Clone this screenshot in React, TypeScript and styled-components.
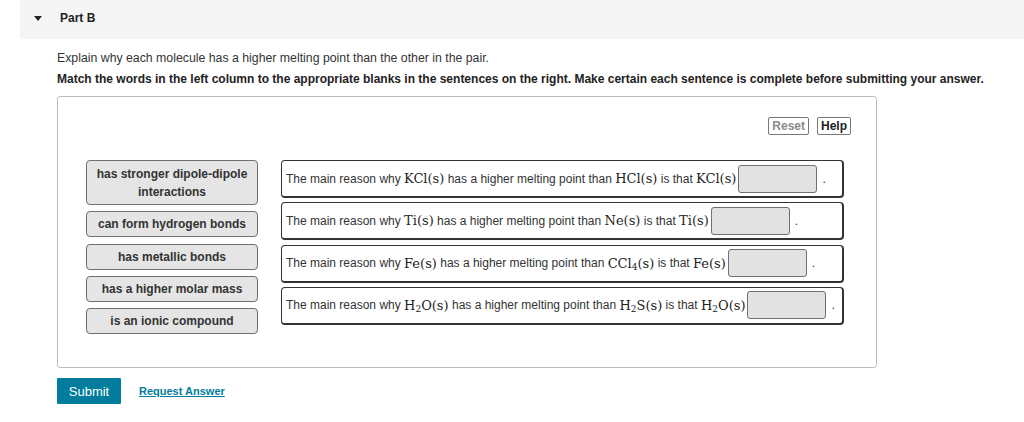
import React from "react";
import styled, { createGlobalStyle } from "styled-components";

const GlobalStyle = createGlobalStyle`
  html, body {
    margin: 0;
    padding: 0;
    background: #ffffff;
    font-family: "Liberation Sans", Arial, sans-serif;
    color: #333333;
  }
`;

const Page = styled.div`
  padding-left: 20px;
  width: 1004px;
`;

const PartHeader = styled.div`
  height: 39px;
  background: #f5f5f5;
  display: flex;
  align-items: center;
  padding-left: 14px;
  gap: 18px;
`;

const Caret = styled.span`
  width: 0;
  height: 0;
  border-left: 4px solid transparent;
  border-right: 4px solid transparent;
  border-top: 5px solid #222;
  margin-top: -3px;
`;

const PartTitle = styled.span`
  font-size: 12px;
  font-weight: bold;
  color: #222;
  margin-top: -4px;
`;

const Body = styled.div`
  padding: 12px 0 0 37px;
`;

const Prompt = styled.p<{ $bold?: boolean }>`
  margin: 0 0 7px;
  font-size: ${(p) => (p.$bold ? "12px" : "12.3px")};
  line-height: 14px;
  font-weight: ${(p) => (p.$bold ? "bold" : "normal")};
  color: ${(p) => (p.$bold ? "#222" : "#333")};
`;

const Panel = styled.div`
  margin-top: 10px;
  width: 820px;
  height: 272px;
  box-sizing: border-box;
  border: 1px solid #bdbdbd;
  border-radius: 3px;
  padding: 20px 25px 0 28px;
`;

const Tools = styled.div`
  display: flex;
  justify-content: flex-end;
  gap: 8px;
`;

const ToolButton = styled.button<{ $muted?: boolean }>`
  font-family: "Liberation Sans", Arial, sans-serif;
  font-size: 12px;
  font-weight: bold;
  height: 18px;
  padding: 0 3px;
  background: #fff;
  border: 1px solid #777;
  border-radius: 2px;
  color: ${(p) => (p.$muted ? "#8a8a8a" : "#222")};
  line-height: 14px;
`;

const Content = styled.div`
  margin-top: 25px;
  display: flex;
  gap: 23px;
`;

const Options = styled.div`
  width: 172px;
  display: flex;
  flex-direction: column;
  gap: 6.3px;
`;

const Option = styled.div<{ $tall?: boolean }>`
  box-sizing: border-box;
  height: ${(p) => (p.$tall ? "45px" : "26px")};
  padding: 0 6px;
  background: #e5e5e5;
  border: 1px solid #6f6f6f;
  border-radius: 4px;
  font-size: 12px;
  line-height: 18px;
  font-weight: bold;
  color: #333;
  text-align: center;
  display: flex;
  align-items: center;
  justify-content: center;
`;

const Sentences = styled.div`
  width: 563px;
  display: flex;
  flex-direction: column;
  gap: 4.3px;
`;

const Sentence = styled.div`
  box-sizing: border-box;
  height: 38px;
  border: 1px solid #333;
  border-bottom-width: 2px;
  border-right-width: 2px;
  border-radius: 4px;
  display: flex;
  align-items: center;
  padding-left: 4px;
  font-size: 12px;
  color: #333;
  white-space: pre;
`;

const Chem = styled.span`
  font-family: "DejaVu Serif", "Liberation Serif", serif;
  font-size: 13px;
  color: #222;
  sub {
    font-size: 9px;
    vertical-align: -2px;
    line-height: 0;
  }
`;

const Blank = styled.span`
  display: inline-block;
  box-sizing: border-box;
  width: 79px;
  height: 28px;
  margin-left: 2px;
  background: #e2e2e2;
  border: 1px solid #707070;
  border-radius: 3px;
`;

const Period = styled.span`
  margin-left: 5px;
`;

const Actions = styled.div`
  margin-top: 10px;
  display: flex;
  align-items: center;
  gap: 18px;
`;

const SubmitButton = styled.button`
  width: 64px;
  height: 26px;
  background: #007c9c;
  color: #fff;
  border: none;
  border-radius: 1px;
  font-family: "Liberation Sans", Arial, sans-serif;
  font-size: 13px;
`;

const RequestLink = styled.a`
  font-size: 11px;
  font-weight: bold;
  color: #007c9c;
  text-decoration: underline;
`;

const options = [
  "has stronger dipole-dipole interactions",
  "can form hydrogen bonds",
  "has metallic bonds",
  "has a higher molar mass",
  "is an ionic compound",
];

const rows: { a: React.ReactNode; b: React.ReactNode }[] = [
  { a: "KCl(s)", b: "HCl(s)" },
  { a: "Ti(s)", b: "Ne(s)" },
  { a: "Fe(s)", b: <>CCl<sub>4</sub>(s)</> },
  { a: <>H<sub>2</sub>O(s)</>, b: <>H<sub>2</sub>S(s)</> },
];

export default function App() {
  return (
    <>
      <GlobalStyle />
      <Page>
        <PartHeader>
          <Caret />
          <PartTitle>Part B</PartTitle>
        </PartHeader>
        <Body>
          <Prompt>
            Explain why each molecule has a higher melting point than the other in the pair.
          </Prompt>
          <Prompt $bold>
            Match the words in the left column to the appropriate blanks in the sentences on the
            right. Make certain each sentence is complete before submitting your answer.
          </Prompt>
          <Panel>
            <Tools>
              <ToolButton $muted>Reset</ToolButton>
              <ToolButton>Help</ToolButton>
            </Tools>
            <Content>
              <Options>
                {options.map((o, i) => (
                  <Option key={o} $tall={i === 0}>
                    {o}
                  </Option>
                ))}
              </Options>
              <Sentences>
                {rows.map((r, i) => (
                  <Sentence key={i}>
                    {"The main reason why "}
                    <Chem>{r.a}</Chem>
                    {" has a higher melting point than "}
                    <Chem>{r.b}</Chem>
                    {" is that "}
                    <Chem>{r.a}</Chem>
                    <Blank />
                    <Period>.</Period>
                  </Sentence>
                ))}
              </Sentences>
            </Content>
          </Panel>
          <Actions>
            <SubmitButton>Submit</SubmitButton>
            <RequestLink href="#">Request Answer</RequestLink>
          </Actions>
        </Body>
      </Page>
    </>
  );
}
